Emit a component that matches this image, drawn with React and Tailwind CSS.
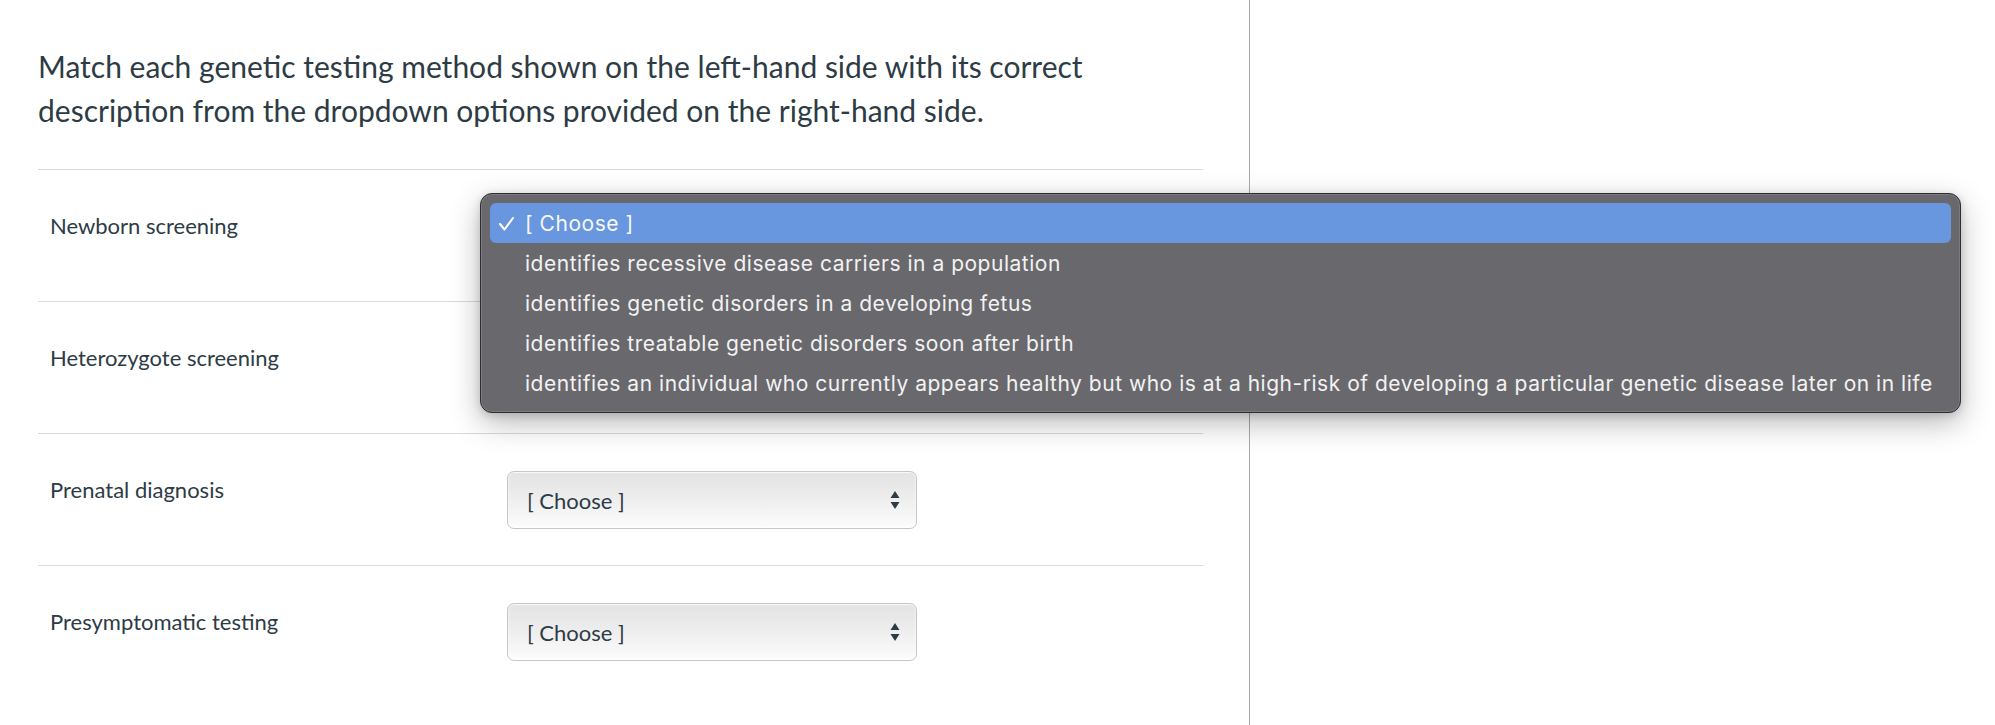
import React from "react";

const labels = [
  "Newborn screening",
  "Heterozygote screening",
  "Prenatal diagnosis",
  "Presymptomatic testing",
];

const options = [
  "identifies recessive disease carriers in a population",
  "identifies genetic disorders in a developing fetus",
  "identifies treatable genetic disorders soon after birth",
  "identifies an individual who currently appears healthy but who is at a high-risk of developing a particular genetic disease later on in life",
];

function Arrows() {
  return (
    <svg width="10" height="20" viewBox="0 0 10 20" className="shrink-0">
      <path d="M5 1 L9.5 8 L0.5 8 Z" fill="#2d3b45" />
      <path d="M5 19 L9.5 12 L0.5 12 Z" fill="#2d3b45" />
    </svg>
  );
}

function Select() {
  return (
    <div className="w-[410px] h-[58px] rounded-[7px] border border-[#c6c6c6] bg-gradient-to-b from-[#e3e3e3] via-[#eeeeee] to-[#fcfcfc] shadow-[inset_0_-2px_3px_rgba(255,255,255,0.9),inset_0_1px_1px_rgba(255,255,255,0.8)] flex items-center justify-between pl-[19px] pr-[16px]">
      <span className="text-[22px] text-[#2d3b45]" style={{ fontFamily: "Lato, 'Open Sans', sans-serif" }}>
        [ Choose ]
      </span>
      <Arrows />
    </div>
  );
}

export default function App() {
  return (
    <div className="relative w-[1995px] h-[725px] bg-white flex overflow-hidden" style={{ fontFamily: "Lato, 'Open Sans', sans-serif" }}>
      <div className="w-[1250px] h-full border-r border-[#a9a9a9] pl-[38px] pr-[46px] pt-[44px] shrink-0">
        <p className="text-[30px] leading-[44px] text-[#2d3b45] w-[1150px]">
          Match each genetic testing method shown on the left-hand side with its correct description from the dropdown options provided on the right-hand side.
        </p>
        <div className="mt-[37px]">
          {labels.map((l) => (
            <div key={l} className="flex items-start h-[132px] pt-[37px] border-t border-[#d9d9d9]">
              <div className="w-[469px] pl-[12px] pt-[4px] text-[22px] leading-[30px] text-[#2d3b45]">{l}</div>
              <Select />
            </div>
          ))}
        </div>
      </div>

      <div
        className="absolute left-[480px] top-[193px] w-[1481px] h-[220px] rounded-[12px] bg-[#69686d] border border-[#2e2e30] shadow-[0_0_0_1px_rgba(255,255,255,0.12)_inset,0_10px_30px_rgba(0,0,0,0.28),0_2px_8px_rgba(0,0,0,0.15)] pt-[9px] pb-[9px] px-[9px] flex flex-col"
        style={{ fontFamily: "Inter, 'Noto Sans', sans-serif" }}
      >
        <div className="h-[40px] rounded-[6px] bg-[#6897e0] flex items-center pt-[2px] text-[#f7f7f7] text-[21px] tracking-[0.52px]">
          <div className="w-[35px] pl-[9px] flex items-center">
            <svg width="15" height="14" viewBox="0 0 15 14">
              <path d="M1 7 L5.5 12.5 L14 1" fill="none" stroke="#ffffff" strokeWidth="2.1" strokeLinecap="round" strokeLinejoin="round" />
            </svg>
          </div>
          <span>[ Choose ]</span>
        </div>
        {options.map((o) => (
          <div key={o} className="h-[40px] flex items-center pt-[2px] pl-[35px] text-[#f2f2f2] text-[21px] tracking-[0.52px] whitespace-nowrap">
            {o}
          </div>
        ))}
      </div>
    </div>
  );
}
